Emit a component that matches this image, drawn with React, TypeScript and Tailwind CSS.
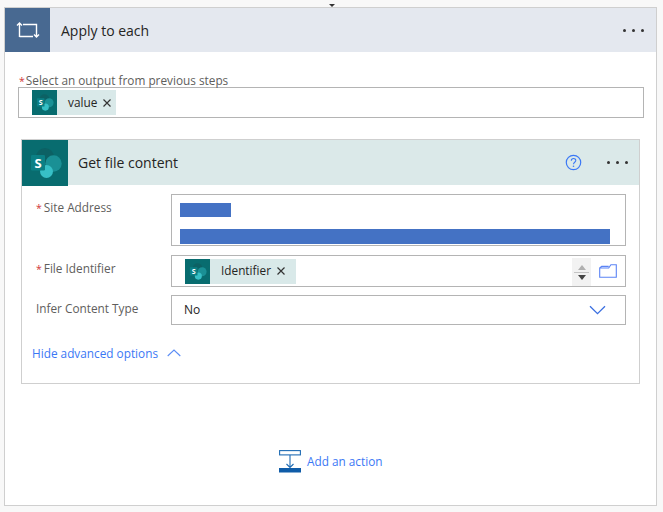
const F = "font-['Open_Sans','Noto_Sans',sans-serif]";

function SharePoint({ size }: { size: number }) {
  return (
    <svg width={size} height={size} viewBox="0 0 46 46" className="block">
      <rect width="46" height="46" fill="#086c6f" />
      <circle cx="23" cy="17" r="9" fill="#0c6164" />
      <circle cx="31.5" cy="23.5" r="8.2" fill="#1a9095" />
      <circle cx="24.5" cy="31.5" r="6.5" fill="#37c0c6" />
      <rect x="9" y="15" width="14" height="15.5" rx="1.2" fill="#0b8085" />
      <text x="16" y="27.5" textAnchor="middle" fontSize="13" fontWeight="700" fill="#fff" fontFamily="'Open Sans',sans-serif">S</text>
    </svg>
  );
}

function Token({ label, className }: { label: string; className: string }) {
  return (
    <div className={`flex h-[25px] items-center bg-[#d9e9e9] ${className}`}>
      <SharePoint size={25} />
      <span className="ml-[11px] text-[11.8px] text-[#252423]">{label}</span>
      <svg width="10" height="10" viewBox="0 0 10 10" className="ml-[5px]">
        <path d="M1.5 1.5l7 7M8.5 1.5l-7 7" stroke="#333" strokeWidth="1.2" />
      </svg>
    </div>
  );
}

function Dots({ className }: { className: string }) {
  return (
    <div className={`flex gap-[6px] ${className}`}>
      <span className="h-[3px] w-[3px] rounded-full bg-[#333]" />
      <span className="h-[3px] w-[3px] rounded-full bg-[#333]" />
      <span className="h-[3px] w-[3px] rounded-full bg-[#333]" />
    </div>
  );
}

function Label({ text, req }: { text: string; req?: boolean }) {
  return (
    <div className="w-[149px] shrink-0 pl-[14px] pt-[5px] text-[11.8px] leading-[16px] text-[#605e5c]">
      {req && <span className="mr-[2px] text-[10.5px] text-[#d13438]">*</span>}
      {text}
    </div>
  );
}

export default function App() {
  return (
    <div className={`relative h-[512px] w-[663px] overflow-hidden bg-[#f8f8f8] pl-[4px] pt-[7px] ${F}`}>
      <div className="absolute left-[329px] top-[4px] h-0 w-0 border-x-[3px] border-t-[3px] border-x-transparent border-t-[#333]" />
      <div className="h-[499px] w-[653px] border border-[#cfcfcf] bg-white">
        <div className="flex h-[44px] items-center bg-[#e4e8ef]">
          <div className="flex h-[44px] w-[45px] items-center justify-center bg-[#486991]">
            <svg width="24" height="18" viewBox="0 0 24 18" fill="none" stroke="#fff" strokeWidth="1.4">
              <path d="M3.5 16V2M1 4.5L3.5 2 6 4.5M3.5 15.5H17" />
              <path d="M7 3.5h13.5V16M18 13.5l2.5 2.5 2.5-2.5" />
            </svg>
          </div>
          <span className="ml-[11px] text-[14px] text-[#252423]">Apply to each</span>
          <Dots className="ml-auto mr-[12px]" />
        </div>

        <div className="ml-[14px] mt-[21px] h-[14px] text-[11.8px] leading-[14px] text-[#605e5c]">
          <span className="mr-[1px] text-[10.5px] text-[#d13438]">*</span>Select an output from previous steps
        </div>
        <div className="ml-[13px] flex h-[31px] w-[626px] items-center border border-[#b4b4b4] pl-[13px]">
          <Token label="value" className="w-[84px]" />
        </div>

        <div className="ml-[16px] mt-[21px] h-[245px] w-[619px] border border-[#cfcfcf]">
          <div className="flex h-[45px] items-center bg-[#dbe9e9]">
            <SharePoint size={46} />
            <span className="ml-[10px] text-[14px] text-[#252423]">Get file content</span>
            <svg width="17" height="17" viewBox="0 0 17 17" fill="none" className="ml-auto">
              <circle cx="8.5" cy="8.5" r="7.2" stroke="#3b78f5" strokeWidth="1.2" />
              <path d="M6.3 6.8c0-3 4.5-3 4.5-.2 0 1.7-2.3 1.7-2.3 3.6" stroke="#3b78f5" strokeWidth="1.1" />
              <circle cx="8.5" cy="12.3" r=".8" fill="#3b78f5" />
            </svg>
            <Dots className="ml-[25px] mr-[11px]" />
          </div>

          <div className="mt-[9px] flex">
            <Label text="Site Address" req />
            <div className="h-[52px] w-[455px] border border-[#b4b4b4] pl-[8px] pt-[8px]">
              <div className="h-[14px] w-[51px] bg-[#4472c4]" />
              <div className="mt-[12px] h-[15px] w-[430px] bg-[#4472c4]" />
            </div>
          </div>

          <div className="mt-[9px] flex">
            <Label text="File Identifier" req />
            <div className="flex h-[32px] w-[455px] items-center border border-[#b4b4b4] pl-[13px]">
              <Token label="Identifier" className="w-[111px]" />
              <div className="ml-auto flex h-[28px] w-[19px] flex-col items-center justify-center gap-[2px] self-end bg-[#f2f2f2]">
                <div className="h-0 w-0 border-x-[4px] border-b-[5px] border-x-transparent border-b-[#b0b0b0]" />
                <div className="h-px w-[15px] bg-[#c4c4c4]" />
                <div className="h-0 w-0 border-x-[4px] border-t-[5px] border-x-transparent border-t-[#444]" />
              </div>
              <svg width="18" height="14" viewBox="0 0 18 14" fill="none" className="ml-[8px] mr-[8px]">
                <path d="M.7 13.3V4h9l2.2-3.3h5.4v12.6z M.7 4l2-1.6h7" stroke="#5b84f5" strokeWidth="1.1" />
              </svg>
            </div>
          </div>

          <div className="mt-[8px] flex">
            <Label text="Infer Content Type" />
            <div className="flex h-[30px] w-[455px] items-center border border-[#b4b4b4] pl-[12px] text-[12px] text-[#252423]">
              No
              <svg width="17" height="10" viewBox="0 0 17 10" fill="none" className="ml-auto mr-[19px]">
                <path d="M1 1.2l7.5 7.5L16 1.2" stroke="#3b6fe0" strokeWidth="1.3" />
              </svg>
            </div>
          </div>

          <div className="ml-[10px] mt-[20px] flex items-center text-[11.8px] leading-[16px] text-[#3b78f5]">
            Hide advanced options
            <svg width="14" height="8" viewBox="0 0 14 8" fill="none" className="ml-[9px]">
              <path d="M.7 7L7 1l6.3 6" stroke="#5b8df5" strokeWidth="1.1" />
            </svg>
          </div>
        </div>

        <div className="ml-[274px] mt-[66px] flex items-center">
          <svg width="22" height="23" viewBox="0 0 22 23" fill="none">
            <rect x=".6" y=".6" width="20.8" height="4.3" stroke="#1f6cb4" strokeWidth="1.1" />
            <path d="M11 5v12M7.5 14l3.5 3.5 3.5-3.5" stroke="#1f6cb4" strokeWidth="1.1" />
            <rect y="18" width="22" height="4.5" fill="#0f5ca8" />
          </svg>
          <span className="ml-[6px] text-[11.8px] text-[#3b78f5]">Add an action</span>
        </div>
      </div>
    </div>
  );
}
